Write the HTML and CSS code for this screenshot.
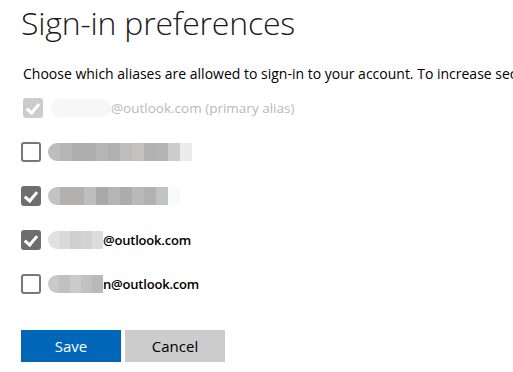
FILE: index.html
```html
<!DOCTYPE html>
<html lang="en">
<head>
    <meta charset="UTF-8">
    <meta name="viewport" content="width=device-width, initial-scale=1.0">
    <title>Sign-in preferences</title>
    <link rel="stylesheet" href="styles.css">
</head>
<body>
    <div class="page">
        <h1>Sign-in preferences</h1>
        <p class="intro">Choose which aliases are allowed to sign-in to your account. To increase security, turn off sign-in for aliases you don't use.</p>

        <form class="aliases">
            <label class="alias disabled">
                <span class="box checked"></span>
                <span class="blur blur-soft" style="width: 60px"></span>
                <span class="name">@outlook.com (primary alias)</span>
            </label>

            <label class="alias">
                <span class="box"></span>
                <span class="blur">
                    <i style="background:#bdbdbd"></i><i style="background:#b3b6b5"></i><i style="background:#afadab"></i><i style="background:#adafaf"></i><i style="background:#b5b5b5"></i><i style="background:#b1b1b1"></i><i style="background:#bcbebe"></i><i style="background:#c4c2c1"></i><i style="background:#b2b2b2"></i><i style="background:#b4b4b4"></i><i style="background:#cdcdcd"></i><i style="background:#ececec"></i>
                </span>
            </label>

            <label class="alias">
                <span class="box checked dark"></span>
                <span class="blur">
                    <i style="background:#c3c3c3"></i><i style="background:#b1b1b1"></i><i style="background:#b2b1b0"></i><i style="background:#bdbfbf"></i><i style="background:#a9a9aa"></i><i style="background:#b5b5b5"></i><i style="background:#acacac"></i><i style="background:#b9b9b9"></i><i style="background:#b2b2b2"></i><i style="background:#c1c2c2"></i><i style="background:#fafafa"></i>
                </span>
            </label>

            <label class="alias">
                <span class="box checked dark"></span>
                <span class="blur short">
                    <i style="background:#e1e1e1"></i><i style="background:#dadada"></i><i style="background:#cfcfcf"></i><i style="background:#d3d3d3"></i><i style="background:#dcdcdc"></i>
                </span>
                <span class="name">@outlook.com</span>
            </label>

            <label class="alias">
                <span class="box"></span>
                <span class="blur short">
                    <i style="background:#c9c9c9"></i><i style="background:#bfc1c1"></i><i style="background:#cbcbcb"></i><i style="background:#c1c1c1"></i><i style="background:#b9b9b9"></i>
                </span>
                <span class="name">n@outlook.com</span>
            </label>

            <div class="actions">
                <button type="button" class="btn primary">Save</button>
                <button type="button" class="btn">Cancel</button>
            </div>
        </form>
    </div>
</body>
</html>
```

FILE: styles.css
```css
body {
    margin: 0;
    font-family: "Open Sans", "Noto Sans", sans-serif;
    color: #000;
    background: #fff;
    overflow: hidden;
}
.page {
    padding: 0 0 0 21px;
    white-space: nowrap;
    overflow: hidden;
}
h1 {
    margin: 0;
    padding-top: 1px;
    font-size: 32px;
    font-weight: 300;
    line-height: 44px;
    color: #1b1b1b;
    letter-spacing: -0.2px;
}
.intro {
    margin: 19px 0 0 2px;
    font-size: 14px;
    line-height: 20px;
    overflow: hidden;
}
.aliases {
    margin: 0;
    padding-top: 2px;
}
.alias {
    display: flex;
    align-items: center;
    height: 44px;
}
.box {
    flex: none;
    box-sizing: border-box;
    width: 20px;
    height: 20px;
    border: 2px solid #777;
    border-radius: 3px;
    background: #fff;
    position: relative;
}
.box.checked::after {
    content: "";
    position: absolute;
    left: 4px;
    top: 1px;
    width: 5px;
    height: 10px;
    border: solid #fff;
    border-width: 0 3px 3px 0;
    transform: rotate(40deg);
}
.box.dark {
    background: #6e6e6e;
    border-color: #6e6e6e;
}
.disabled .box {
    margin-left: 2px;
    background: #cccccc;
    border-color: #cccccc;
}
.blur {
    display: flex;
    margin-left: 7px;
    height: 18px;
    border-radius: 9px 0 0 9px;
    overflow: hidden;
    filter: blur(0.6px);
}
.blur i {
    width: 12px;
    height: 100%;
}
.blur.short i {
    width: 11px;
}
.blur-soft {
    background: #f7f7f7;
    border-radius: 9px;
    margin-left: 8px;
}
.name {
    font-size: 13px;
    font-weight: 600;
    letter-spacing: -0.2px;
}
.disabled .name {
    font-size: 13.5px;
    font-weight: 400;
    letter-spacing: 0;
    color: #b9b9b9;
}
.actions {
    display: flex;
    gap: 4px;
    margin-top: 24px;
}
.btn {
    width: 100px;
    height: 32px;
    border: 0;
    border-radius: 0;
    padding: 0;
    font-family: "Open Sans", "Noto Sans", sans-serif;
    font-size: 15px;
    background: #cccccc;
    color: #000;
}
.btn.primary {
    background: #0067b8;
    color: #fff;
}
```
